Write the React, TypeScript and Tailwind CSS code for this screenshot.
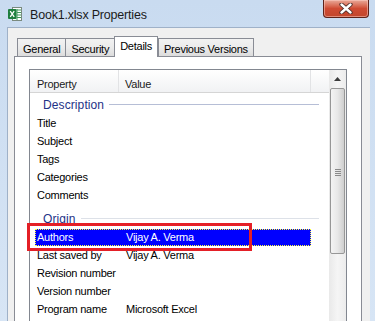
import React from "react";

const propRows1 = ["Title", "Subject", "Tags", "Categories", "Comments"];

const propRows2: [string, string][] = [
  ["Last saved by", "Vijay A. Verma"],
  ["Revision number", ""],
  ["Version number", ""],
  ["Program name", "Microsoft Excel"],
];

function ExcelIcon() {
  return (
    <svg width="14" height="16" viewBox="0 0 14 16">
      <rect x="4.5" y="1.5" width="9" height="13" fill="#fff" stroke="#7a8a7f" />
      <path d="M9 4h4M9 6.5h4M9 9h4M9 11.5h4M9 3v11" stroke="#3f9a5c" strokeWidth="1" />
      <rect x="0" y="3" width="8.5" height="10" rx="1" fill="#1e7e3e" />
      <path d="M2.2 5.2l4 5.6M6.2 5.2l-4 5.6" stroke="#fff" strokeWidth="1.3" />
    </svg>
  );
}

function CloseButton() {
  return (
    <div className="w-[46px] h-[18px] rounded-b-[4px] border border-t-0 border-[#5e2219] bg-gradient-to-b from-[#e8a999] via-[#cf4b33] to-[#c2462c] flex items-center justify-center shadow-[inset_0_0_0_1px_rgba(255,210,200,0.5)]">
      <svg width="14" height="11" viewBox="0 0 14 11">
        <path d="M2.5 1.5l9 8M11.5 1.5l-9 8" stroke="#4a2a26" strokeWidth="4.2" strokeLinecap="round" />
        <path d="M2.5 1.5l9 8M11.5 1.5l-9 8" stroke="#fff" strokeWidth="2.4" strokeLinecap="round" />
      </svg>
    </div>
  );
}

function Tab({ label, active }: { label: string; active?: boolean }) {
  if (active) {
    return (
      <div className="h-[21px] -mb-px relative z-10 px-[5px] pt-[1px] bg-white border border-b-0 border-[#898c95] flex items-start">
        {label}
      </div>
    );
  }
  return (
    <div className="h-[18px] mt-[2px] px-[5px] pt-[2px] bg-gradient-to-b from-[#f2f2f2] via-[#ebebeb] to-[#dcdcdc] border border-b-0 border-[#898c95] -mr-px flex items-start">
      {label}
    </div>
  );
}

function GroupRow({ label, h, line }: { label: string; h: string; line: string }) {
  return (
    <div className={`${h} flex items-end pb-[3px] pl-[13px] pr-[10px]`}>
      <span className="text-[#1e3287] text-[12px] leading-none tracking-[0.1px]">{label}</span>
      <div className={`flex-1 h-px ml-[5px] mb-[6px] ${line}`} />
    </div>
  );
}

function Scrollbar() {
  return (
    <div className="w-[17px] shrink-0 bg-gradient-to-r from-[#e9e9e9] via-[#f5f5f5] to-[#ececec] flex flex-col">
      <div className="h-[18px] flex items-center justify-center">
        <svg width="7" height="4" viewBox="0 0 7 4">
          <path d="M0 4L3.5 0L7 4Z" fill="#3c3c3c" />
        </svg>
      </div>
      <div className="h-[166px] mx-px rounded-[2px] border border-[#979797] bg-gradient-to-r from-[#f4f4f4] via-[#e8e8e8] to-[#cfcfcf] flex items-center justify-center">
        <div className="flex flex-col gap-[1px] mt-[2px]">
          <div className="w-[6px] h-px bg-[#8a8a8a]" />
          <div className="w-[6px] h-px bg-[#8a8a8a]" />
          <div className="w-[6px] h-px bg-[#8a8a8a]" />
          <div className="w-[6px] h-px bg-[#8a8a8a]" />
        </div>
      </div>
      <div className="flex-1" />
    </div>
  );
}

export default function App() {
  return (
    <div className="w-[375px] h-[321px] overflow-hidden bg-gradient-to-b from-[#c9dbf0] to-[#d7e5f5] font-['Liberation_Sans',Arial,sans-serif] text-[11px] tracking-[-0.25px] text-black flex flex-col">
      {/* title bar */}
      <div className="h-[27px] shrink-0 flex items-start pl-[8px] pr-[6px]">
        <div className="mt-[6px]">
          <ExcelIcon />
        </div>
        <div className="ml-[8px] mt-[6px] text-[12.5px] tracking-[-0.2px] text-[#1b1b1b]">
          Book1.xlsx Properties
        </div>
        <div className="flex-1" />
        <CloseButton />
      </div>

      {/* client area */}
      <div className="flex-1 ml-[7px] mr-[5px] bg-[#f0f0f0] border-l border-t border-[#9fb1c8] flex flex-col pt-[7px]">
        <div className="flex pl-[9px] h-[21px] items-end">
          <Tab label="General" />
          <Tab label="Security" />
          <Tab label="Details" active />
          <Tab label="Previous Versions" />
        </div>

        <div className="flex-1 ml-[6px] mr-[8px] bg-white border border-b-0 border-[#898c95] pt-[12px] px-[14px]">
          <div className="h-full border border-b-0 border-[#828790] flex">
            <div className="flex-1 flex flex-col">
              {/* header */}
              <div className="h-[23px] shrink-0 flex bg-gradient-to-b from-white to-[#f1f2f4] border-b border-[#d5d5d5] text-[#1b1b1b]">
                <div className="w-[89px] pl-[7px] pt-[6px] border-r border-[#e2e3e5]">Property</div>
                <div className="w-[192px] pl-[6px] pt-[6px] border-r border-[#e2e3e5]">Value</div>
                <div className="flex-1" />
              </div>

              <GroupRow label="Description" h="h-[21px]" line="bg-[#b6bed6]" />
              {propRows1.map((r) => (
                <div key={r} className="h-[18px] flex items-center pl-[7px]">
                  {r}
                </div>
              ))}

              <GroupRow label="Origin" h="h-[24px]" line="bg-[#dde1e8]" />

              <div className="h-[18px] relative flex items-center">
                <div className="ml-[5px] w-[276px] h-[17px] bg-[#0000ff] border border-dotted border-[#ffff3c] text-white flex items-center">
                  <span className="w-[90px] pl-[1px] shrink-0">Authors</span>
                  <span>Vijay A. Verma</span>
                </div>
                <div className="absolute left-[-3px] top-[-5px] w-[225px] h-[28px] border-[3px] border-[#e41f26]" />
              </div>

              {propRows2.map(([k, v]) => (
                <div key={k} className="h-[18px] flex items-center">
                  <span className="w-[89px] pl-[7px]">{k}</span>
                  <span className="pl-[7px]">{v}</span>
                </div>
              ))}
            </div>
            <Scrollbar />
          </div>
        </div>
      </div>
    </div>
  );
}
